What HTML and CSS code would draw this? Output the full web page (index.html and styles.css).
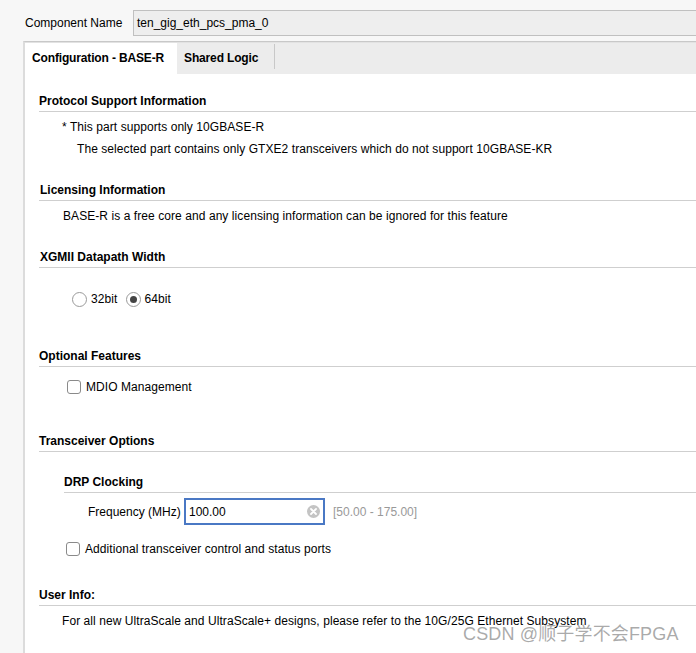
FILE: index.html
```html
<!DOCTYPE html>
<html>
<head>
<meta charset="utf-8">
<link rel="stylesheet" href="styles.css">
</head>
<body>
<div class="page">
  <div class="top">
    <span class="top-label">Component Name</span>
    <div class="name-box">ten_gig_eth_pcs_pma_0</div>
  </div>
  <div class="panel">
    <div class="tabs">
      <div class="tab active">Configuration - BASE-R</div>
      <div class="tab">Shared Logic</div>
    </div>
    <div class="content">
      <div class="hdr h-protocol">Protocol Support Information</div>
      <div class="txt t-part">* This part supports only 10GBASE-R</div>
      <div class="txt t-sel">The selected part contains only GTXE2 transceivers which do not support 10GBASE-KR</div>

      <div class="hdr h-lic">Licensing Information</div>
      <div class="txt t-lic">BASE-R is a free core and any licensing information can be ignored for this feature</div>

      <div class="hdr h-xgmii">XGMII Datapath Width</div>
      <div class="radios">
        <span class="radio"></span><span class="rlabel">32bit</span>
        <span class="radio on"></span><span class="rlabel">64bit</span>
      </div>

      <div class="hdr h-opt">Optional Features</div>
      <div class="check-row c-mdio"><span class="check"></span><span>MDIO Management</span></div>

      <div class="hdr h-trx">Transceiver Options</div>
      <div class="sub">
        <div class="hdr h-drp">DRP Clocking</div>
        <div class="freq-row">
          <span class="flabel">Frequency (MHz)</span>
          <div class="finput">
            <span class="fval">100.00</span>
            <svg class="clear" width="13" height="13" viewBox="0 0 13 13">
              <circle cx="6.5" cy="6.5" r="6.5" fill="#c4c4c4"/>
              <path d="M4 4 L9 9 M9 4 L4 9" stroke="#fff" stroke-width="1.8" stroke-linecap="round"/>
            </svg>
          </div>
          <span class="range">[50.00 - 175.00]</span>
        </div>
      </div>
      <div class="check-row c-add"><span class="check"></span><span>Additional transceiver control and status ports</span></div>

      <div class="hdr h-user">User Info:</div>
      <div class="txt t-user">For all new UltraScale and UltraScale+ designs, please refer to the 10G/25G Ethernet Subsystem</div>
    </div>
  </div>
  <div class="watermark">CSDN @顺子学不会FPGA</div>
</div>
</body>
</html>
```

FILE: styles.css
```css
html, body {
  margin: 0;
  padding: 0;
  background: #f7f7f7;
  overflow: hidden;
}
.page {
  position: relative;
  width: 696px;
  height: 653px;
  overflow: hidden;
  font-family: "Liberation Sans", Arial, sans-serif;
  font-size: 12px;
  color: #000;
}
.top {
  display: flex;
  align-items: center;
  height: 26px;
  padding-top: 10px;
  padding-left: 25px;
}
.top-label {
  width: 108px;
}
.name-box {
  flex: 1;
  height: 24px;
  line-height: 24px;
  background: #eeeeee;
  border: 1px solid #c0c0c0;
  border-right: none;
  padding-left: 3px;
}
.panel {
  margin-top: 5px;
  margin-left: 23px;
  border-left: 2px solid #dcdcdc;
  border-top: 1px solid #c8c8c8;
  background: #fff;
  height: 620px;
}
.tabs {
  display: flex;
  height: 31px;
  background: #ececec;
  border-top: 1px solid #e2e2e2;
}
.tab {
  font-weight: bold;
  line-height: 30px;
  letter-spacing: -0.15px;
}
.tab.active {
  background: #fff;
  padding: 0 13px 0 7px;
}
.tab + .tab {
  padding: 0 16px 0 7px;
  border-right: 1px solid #c8c8c8;
  height: 25px;
  line-height: 28px;
  margin-top: 1px;
}
.content {
  padding-left: 14px;
}
.hdr {
  font-weight: bold;
  line-height: 14px;
  padding-bottom: 3px;
  border-bottom: 1px solid #cfcfcf;
}
.txt {
  line-height: 14px;
  white-space: nowrap;
  letter-spacing: 0.07px;
}
.h-protocol { margin-top: 20px; }
.t-part { margin-top: 8px; padding-left: 23px; }
.t-sel { margin-top: 8px; padding-left: 38px; }
.h-lic { margin-top: 27px; padding-left: 1px; }
.t-lic { margin-top: 8px; padding-left: 24px; }
.h-xgmii { margin-top: 27px; padding-left: 1px; }
.radios {
  margin-top: 24px;
  padding-left: 33px;
  display: flex;
  align-items: center;
  height: 14px;
}
.radio {
  border: 1px solid #9a9a9a;
  border-radius: 50%;
  background: #fff;
  box-sizing: border-box;
  width: 15px;
  height: 15px;
  display: flex;
  align-items: center;
  justify-content: center;
}
.radio.on::after {
  content: "";
  width: 7px;
  height: 7px;
  border-radius: 50%;
  background: #444;
}
.rlabel {
  margin-left: 4px;
  margin-right: 8px;
  letter-spacing: 0.1px;
}
.h-opt { margin-top: 43px; }
.check-row {
  display: flex;
  align-items: center;
  line-height: 14px;
  letter-spacing: 0.07px;
}
.check {
  width: 14px;
  height: 14px;
  box-sizing: border-box;
  border: 1px solid #8a8a8a;
  border-radius: 3px;
  background: #fff;
  margin-right: 5px;
}
.c-mdio { margin-top: 13px; padding-left: 28px; }
.h-trx { margin-top: 40px; }
.sub {
  padding-left: 25px;
}
.h-drp { margin-top: 23px; }
.freq-row {
  margin-top: 5px;
  display: flex;
  align-items: center;
  padding-left: 24px;
}
.flabel {
  width: 96px;
}
.finput {
  width: 141px;
  height: 27px;
  box-sizing: border-box;
  border: 2px solid #4a78c4;
  background: #fff;
  display: flex;
  align-items: center;
  padding-left: 3px;
  padding-right: 3px;
}
.fval { flex: 1; }
.clear { display: block; }
.range {
  margin-left: 8px;
  color: #999;
}
.c-add { margin-top: 17px; padding-left: 27px; }
.h-user { margin-top: 32px; }
.t-user { margin-top: 8px; padding-left: 23px; }
.watermark {
  position: absolute;
  left: 463px;
  top: 623px;
  font-family: "Liberation Sans", "Noto Sans CJK SC", sans-serif;
  font-size: 18px;
  line-height: 22px;
  letter-spacing: 0.15px;
  color: rgba(155, 155, 155, 0.85);
  white-space: nowrap;
}
```
